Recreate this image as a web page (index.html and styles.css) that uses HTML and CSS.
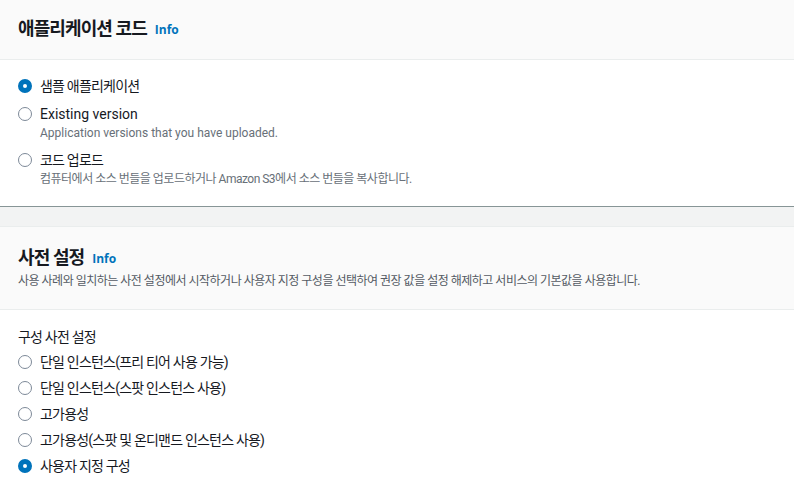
FILE: index.html
```html
<!DOCTYPE html>
<html lang="ko">
<head>
  <meta charset="UTF-8">
  <title>애플리케이션 코드</title>
  <link rel="stylesheet" href="styles.css">
</head>
<body>
<section class="panel">
  <header class="panel-head first">
    <h2><span class="ko">애플리케이션 코드</span> <a class="info" href="#">Info</a></h2>
  </header>
  <div class="panel-body">
    <div class="radio-row">
      <span class="radio checked"></span>
      <div>
        <div class="label ko">샘플 애플리케이션</div>
      </div>
    </div>
    <div class="radio-row">
      <span class="radio"></span>
      <div>
        <div class="label">Existing version</div>
        <div class="desc">Application versions that you have uploaded.</div>
      </div>
    </div>
    <div class="radio-row">
      <span class="radio"></span>
      <div>
        <div class="label ko">코드 업로드</div>
        <div class="desc ko">컴퓨터에서 소스 번들을 업로드하거나 Amazon S3에서 소스 번들을 복사합니다.</div>
      </div>
    </div>
  </div>
</section>

<div class="gap"></div>

<section class="panel">
  <header class="panel-head second">
    <h2><span class="ko">사전 설정</span> <a class="info" href="#">Info</a></h2>
    <p class="head-desc ko">사용 사례와 일치하는 사전 설정에서 시작하거나 사용자 지정 구성을 선택하여 권장 값을 설정 해제하고 서비스의 기본값을 사용합니다.</p>
  </header>
  <div class="panel-body second-body">
    <div class="group-label ko">구성 사전 설정</div>
    <div class="radio-list">
      <div class="radio-row"><span class="radio"></span><div class="label ko">단일 인스턴스(프리 티어 사용 가능)</div></div>
      <div class="radio-row"><span class="radio"></span><div class="label ko">단일 인스턴스(스팟 인스턴스 사용)</div></div>
      <div class="radio-row"><span class="radio"></span><div class="label ko">고가용성</div></div>
      <div class="radio-row"><span class="radio"></span><div class="label ko">고가용성(스팟 및 온디맨드 인스턴스 사용)</div></div>
      <div class="radio-row"><span class="radio checked"></span><div class="label ko">사용자 지정 구성</div></div>
    </div>
  </div>
</section>
</body>
</html>
```

FILE: styles.css
```css
body {
  margin: 0;
  background: #fff;
  color: #16191f;
  font-family: Roboto, "Noto Sans CJK KR", sans-serif;
  font-size: 14px;
}

/* 한글 글꼴이 원본보다 넓어서 자간을 조금 줄임 */
.ko {
  letter-spacing: -0.8px;
}

.panel-head {
  background: #fafafa;
  border-bottom: 1px solid #eaeded;
  padding: 0 18px;
}

.panel-head.first {
  height: 60px;
  box-sizing: border-box;
  padding-top: 17px;
}

.panel-head.second {
  padding-top: 19px;
  padding-bottom: 20px;
}

.panel-head h2 {
  margin: 0;
  font-size: 18px;
  line-height: 22px;
  font-weight: 700;
  display: flex;
  align-items: center;
  gap: 8px;
}

.panel-head h2 .ko {
  letter-spacing: -0.9px;
}

.info {
  color: #0073bb;
  font-size: 12px;
  font-weight: 700;
  text-decoration: none;
  font-family: "Open Sans", "Noto Sans", sans-serif;
  margin-top: 2px;
}

.head-desc {
  margin: 3px 0 0;
  font-size: 12px;
  line-height: 16px;
  color: #545b64;
}

.panel-body {
  padding: 16px 18px 18px;
  display: flex;
  flex-direction: column;
  gap: 8px;
}

.second-body {
  padding-top: 17px;
  gap: 5px;
}

.radio-list {
  display: flex;
  flex-direction: column;
  gap: 6px;
}

.radio-row {
  display: flex;
  align-items: flex-start;
  gap: 8px;
}

.radio {
  flex: none;
  width: 14px;
  height: 14px;
  margin-top: 3px;
  box-sizing: border-box;
  border: 1.5px solid #7d8998;
  border-radius: 50%;
  background: #fff;
}

.radio.checked {
  border: 5px solid #0073bb;
}

.label,
.group-label {
  line-height: 20px;
}

.desc {
  font-size: 12px;
  line-height: 18px;
  color: #687078;
}

.desc.ko,
.head-desc.ko {
  letter-spacing: -0.5px;
}

.gap {
  height: 19px;
  background: #f2f3f3;
  border-top: 1px solid #879596;
  border-bottom: 1px solid #eaeded;
}
```
